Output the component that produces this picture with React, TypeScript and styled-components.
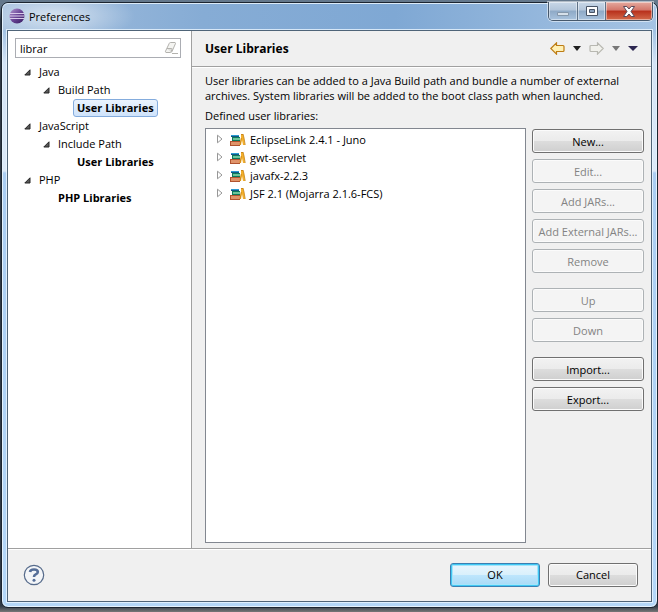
import React from "react";
import styled, { createGlobalStyle, css } from "styled-components";

const GlobalStyle = createGlobalStyle`
  * { box-sizing: border-box; }
  html, body { margin: 0; padding: 0; }
  body, button, input {
    font-family: "Open Sans", "Noto Sans", sans-serif;
    font-size: 11px;
    line-height: 15px;
    color: #000;
  }
  h1, h2, p, ul { margin: 0; padding: 0; }
  ul { list-style: none; }
  svg { display: block; }
`;

const Desktop = styled.div`
  min-height: 100vh;
  padding: 2px 0 4px 1px;
  display: flex;
  background: linear-gradient(180deg, #64788c 0, #64788c 6px, #303a46 20px, #303a46 calc(100% - 6px), #777 100%);
`;

const Window = styled.section`
  flex: 1;
  min-width: 0;
  display: flex;
  flex-direction: column;
  padding: 0 5px 5px;
  border: 1px solid #1c2530;
  border-radius: 7px;
  box-shadow: inset 0 0 0 1px #e4f2fd;
  background:
    linear-gradient(180deg, #8fb3d9 0, #a3c3e4 28px, #d3e3f5 60px, #dbe9f8 168px, #aacdf2 170px, #b4d7f8 100%);
`;

const TitleBar = styled.header`
  height: 27px;
  margin: 0 -4px;
  padding: 0 0 0 6px;
  display: flex;
  flex-shrink: 0;
  border-top: 1px solid #dcebf8;
  border-radius: 6px 6px 0 0;
  background:
    radial-gradient(ellipse 80px 26px at 52px 12px, rgba(255, 255, 255, 0.6), rgba(255, 255, 255, 0) 100%),
    linear-gradient(90deg, #a2bedd 0, #86acd5 200px, #7fa8d4 60%, #a5c3e3 100%);
`;

const Title = styled.h1`
  flex: 1;
  padding: 5px 0 0 4px;
  font-size: 11px;
  font-weight: 400;
  line-height: 15px;
`;

const AppIcon = styled.div`
  padding-top: 4px;
`;

const Captions = styled.div`
  display: flex;
  height: 19px;
  margin: -2px 3px 0 0;
  border: 1px solid #46586c;
  border-top: 0;
  border-radius: 0 0 5px 5px;
  overflow: hidden;
  box-shadow: 0 0 0 1px rgba(255, 255, 255, 0.5);
`;

const CaptionButton = styled.button<{ $kind?: "close" }>`
  width: ${(p) => (p.$kind ? 47 : 28)}px;
  padding: 0;
  display: flex;
  align-items: center;
  justify-content: center;
  border: 0;
  background: linear-gradient(180deg, #c8d7e7 0, #b2c5da 45%, #8ea9c6 50%, #a9c3de 100%);
  box-shadow: inset 0 0 0 1px rgba(255, 255, 255, 0.45);
  & + & { border-left: 1px solid #5e7186; }
  ${(p) =>
    p.$kind &&
    css`
      background: linear-gradient(180deg, #e5aa9f 0, #d3766a 45%, #b8301b 50%, #d36a4b 100%);
    `}
`;

const Client = styled.div`
  flex: 1;
  min-height: 0;
  display: flex;
  flex-direction: column;
  border: 1px solid #4f6478;
  background: #f0f0f0;
  box-shadow: 0 0 0 1px rgba(235, 246, 255, 0.8);
`;

const Panes = styled.div`
  flex: 1;
  display: flex;
  border-bottom: 1px solid #a0a0a0;
`;

const Sidebar = styled.nav`
  width: 184px;
  flex-shrink: 0;
  padding: 7px 7px 0 7px;
  background: #fff;
  border-right: 1px solid #a0a0a0;
`;

const FilterBox = styled.div`
  height: 20px;
  margin-right: 3px;
  padding: 0 2px 0 4px;
  display: flex;
  align-items: center;
  border: 1px solid #abadb3;
`;

const FilterInput = styled.input`
  flex: 1;
  min-width: 0;
  padding: 0;
  border: 0;
  outline: 0;
  background: transparent;
`;

const IconButton = styled.button`
  padding: 0;
  border: 0;
  background: none;
`;

const Tree = styled.ul`
  padding-top: 5px;
`;

const TreeRow = styled.li<{ $level: number; $match?: boolean }>`
  height: 18px;
  padding-left: ${(p) => 9 + p.$level * 19}px;
  display: flex;
  align-items: center;
  font-weight: ${(p) => (p.$match ? 700 : 400)};
`;

const Toggle = styled.span`
  width: 11px;
  flex-shrink: 0;
`;

const TreeLabel = styled.span<{ $selected?: boolean }>`
  height: 18px;
  padding: 0 3px;
  line-height: 16px;
  white-space: nowrap;
  border: 1px solid transparent;
  border-radius: 3px;
  ${(p) =>
    p.$selected &&
    css`
      border-color: #84acdd;
      background: linear-gradient(180deg, #eaf3fe, #cfe3fb);
    `}
`;

const Page = styled.main`
  flex: 1;
  min-width: 0;
  display: flex;
  flex-direction: column;
`;

const PageHeader = styled.div`
  height: 36px;
  padding: 0 13px;
  display: flex;
  align-items: center;
  justify-content: space-between;
  border-bottom: 1px solid #a0a0a0;
  box-shadow: 0 1px 0 #fff;
`;

const PageTitle = styled.h2`
  font-size: 12px;
  line-height: 18px;
  font-weight: 700;
`;

const History = styled.div`
  display: flex;
  align-items: center;
  gap: 8px;
`;

const PageBody = styled.div`
  flex: 1;
  display: flex;
  flex-direction: column;
  padding: 6px 7px 5px 13px;
`;

const Description = styled.p`
  max-width: 434px;
`;

const ListLabel = styled.p`
  margin: 5px 0;
`;

const Columns = styled.div`
  flex: 1;
  display: flex;
  gap: 6px;
`;

const LibraryList = styled.ul`
  flex: 1;
  padding: 1px 0;
  background: #fff;
  border: 1px solid #828790;
`;

const LibraryRow = styled.li`
  height: 18px;
  padding-left: 11px;
  display: flex;
  align-items: center;
`;

const LibraryIcon = styled.span`
  margin: 0 4px 0 7px;
`;

const Actions = styled.div`
  width: 112px;
  display: flex;
  flex-direction: column;
  gap: 15px;
  padding-top: 1px;
`;

const ActionGroup = styled.div`
  display: flex;
  flex-direction: column;
  gap: 6px;
`;

const PushButton = styled.button<{ $primary?: boolean }>`
  height: 24px;
  padding: 0 2px;
  white-space: nowrap;
  border: 1px solid #707070;
  border-radius: 3px;
  background: linear-gradient(180deg, #f2f2f2 0, #ebebeb 50%, #dddddd 50%, #cfcfcf 100%);
  box-shadow: inset 0 0 0 1px #fbfbfb;
  &:disabled {
    color: #838383;
    border-color: #adb2b5;
    background: #f4f4f4;
  }
  ${(p) =>
    p.$primary &&
    css`
      border-color: #3c7fb1;
      background: linear-gradient(180deg, #eaf6fd 0, #d9f0fc 50%, #bee6fd 50%, #a7d9f5 100%);
      box-shadow: inset 0 0 0 1px #3fc8f4, inset 0 0 0 2px #a5e4fa;
    `}
`;

const Footer = styled.footer`
  height: 52px;
  padding: 0 13px 2px 15px;
  display: flex;
  align-items: center;
  justify-content: space-between;
  border-top: 1px solid #fff;
`;

const DialogButtons = styled.div`
  display: grid;
  grid-template-columns: 90px 90px;
  gap: 8px;
`;

const EclipseIcon = () => (
  <svg width="16" height="16" viewBox="0 0 16 16">
    <defs>
      <linearGradient id="orb" x1="0" y1="0" x2="1" y2="1">
        <stop offset="0" stopColor="#b39ad0" />
        <stop offset="0.5" stopColor="#6a4596" />
        <stop offset="1" stopColor="#341a5e" />
      </linearGradient>
    </defs>
    <circle cx="8" cy="8" r="7.5" fill="url(#orb)" />
    <path d="M1 5.5h14M.5 8h15M1 10.5h14" stroke="#d9cbea" strokeWidth="1" />
  </svg>
);

const Eraser = () => (
  <svg width="14" height="14" viewBox="0 0 14 14" fill="#f4f4f1" stroke="#b3b2ae">
    <path d="M6.5 1.500h4.500q.8.300.5 1L8 10.500q-.5 1-1.500 1H2q-1-.3-.5-1.300L5.300 2.300q.3-.8 1.200-.8z" />
    <path d="M3 7.500h4.500q1 0 .5 1L7 11" fill="#dededb" />
    <path d="M8 12.500h6" />
  </svg>
);

const Expanded = () => (
  <svg width="7" height="7" viewBox="0 0 7 7">
    <path d="M6 .8V6H.8z" fill="#595959" stroke="#262626" />
  </svg>
);

const Collapsed = () => (
  <svg width="6" height="10" viewBox="0 0 6 10">
    <path d="M.5 1.200v7.600L5 5z" fill="#fff" stroke="#979797" />
  </svg>
);

const Books = () => (
  <svg width="16" height="13" viewBox="0 0 16 13">
    <path d="M1 2h8v1H1z" fill="#2b9bd2" />
    <path d="M1 3h8v1H1z" fill="#145685" />
    <path d="M2 4h8v4H2z" fill="#0c7a5c" />
    <path d="M3 5h7v2H3z" fill="#6cc49b" />
    <path d="M0 8h10v5H0z" fill="#b0532f" />
    <path d="M1 9h9v3H1z" fill="#e0936a" />
    <path d="M11 1h2l1 4 1 7h-2l-1-5-1 5H9.500L11 5z" fill="#f3b02c" />
    <path d="M13 1l1 4 1.200 7M11.300 5L10 12M11 1.500h2" stroke="#c47f12" strokeWidth=".8" fill="none" />
  </svg>
);

const BackArrow = () => (
  <svg width="15" height="13" viewBox="0 0 15 13">
    <path d="M.8 6.500L6.500.900v2.600H13q1 0 1 1v4q0 1-1 1H6.500v2.600z" fill="#fff0b4" stroke="#bd7c13" strokeWidth="1.200" />
  </svg>
);

const ForwardArrow = () => (
  <svg width="15" height="13" viewBox="0 0 15 13">
    <path d="M14.200 6.500L8.500.900v2.600H2q-1 0-1 1v4q0 1 1 1h6.500v2.600z" fill="#f1f1ec" stroke="#b8b8b1" strokeWidth="1.200" />
  </svg>
);

const Caret = ({ color, width = 8 }: { color: string; width?: number }) => (
  <svg width={width} height="5" viewBox="0 0 7 4" preserveAspectRatio="none">
    <path d="M0 0h7L3.500 4z" fill={color} />
  </svg>
);

const Help = () => (
  <svg width="22" height="22" viewBox="0 0 22 22" fill="none">
    <circle cx="11" cy="11" r="9.700" fill="#f3f5f8" stroke="#566b8b" strokeWidth="1.200" />
    <path d="M7 8Q7.300 5.500 11 5.500t3.800 2.400Q14.800 9.300 12.700 10.400 11 11.200 11 13" stroke="#556e98" strokeWidth="2.600" />
    <circle cx="11" cy="16.200" r="1.500" fill="#556e98" />
  </svg>
);

const MinimizeGlyph = () => (
  <svg width="12" height="12" viewBox="0 0 12 12">
    <path d="M.5 7.500h11v3H.5z" fill="#d6e0ea" stroke="#8497ab" />
  </svg>
);

const MaximizeGlyph = () => (
  <svg width="12" height="10" viewBox="0 0 12 10">
    <path d="M.5.500h11v9H.5z" fill="#fff" stroke="#485466" />
    <path d="M3.500 3.500h5v3h-5z" fill="#8ba3bf" stroke="#485466" />
  </svg>
);

const CloseGlyph = () => (
  <svg width="12" height="11" viewBox="0 0 12 11">
    <path d="M.5.500h3.300L6 3 8.200.500h3.300L8 5.500l3.500 5H8.200L6 8l-2.200 2.500H.5l3.500-5z" fill="#fff" stroke="#58495a" />
  </svg>
);

const tree = [
  { label: "Java", level: 0, open: true },
  { label: "Build Path", level: 1, open: true },
  { label: "User Libraries", level: 2, match: true, selected: true },
  { label: "JavaScript", level: 0, open: true },
  { label: "Include Path", level: 1, open: true },
  { label: "User Libraries", level: 2, match: true },
  { label: "PHP", level: 0, open: true },
  { label: "PHP Libraries", level: 1, match: true },
];

const libraries = ["EclipseLink 2.4.1 - Juno", "gwt-servlet", "javafx-2.2.3", "JSF 2.1 (Mojarra 2.1.6-FCS)"];

const actionGroups = [
  [
    { label: "New...", enabled: true },
    { label: "Edit..." },
    { label: "Add JARs..." },
    { label: "Add External JARs..." },
    { label: "Remove" },
  ],
  [{ label: "Up" }, { label: "Down" }],
  [
    { label: "Import...", enabled: true },
    { label: "Export...", enabled: true },
  ],
];

export default function App() {
  return (
    <Desktop>
      <GlobalStyle />
      <Window>
        <TitleBar>
          <AppIcon><EclipseIcon /></AppIcon>
          <Title>Preferences</Title>
          <Captions>
            <CaptionButton aria-label="Minimize"><MinimizeGlyph /></CaptionButton>
            <CaptionButton aria-label="Maximize"><MaximizeGlyph /></CaptionButton>
            <CaptionButton aria-label="Close" $kind="close"><CloseGlyph /></CaptionButton>
          </Captions>
        </TitleBar>
        <Client>
          <Panes>
            <Sidebar>
              <FilterBox>
                <FilterInput aria-label="Filter" defaultValue="librar" />
                <IconButton aria-label="Clear filter"><Eraser /></IconButton>
              </FilterBox>
              <Tree>
                {tree.map((n, i) => (
                  <TreeRow key={i} $level={n.level} $match={n.match}>
                    <Toggle>{n.open && <Expanded />}</Toggle>
                    <TreeLabel $selected={n.selected}>{n.label}</TreeLabel>
                  </TreeRow>
                ))}
              </Tree>
            </Sidebar>
            <Page>
              <PageHeader>
                <PageTitle>User Libraries</PageTitle>
                <History>
                  <IconButton aria-label="Back"><BackArrow /></IconButton>
                  <IconButton aria-label="Back history"><Caret color="#202020" /></IconButton>
                  <IconButton aria-label="Forward" disabled><ForwardArrow /></IconButton>
                  <IconButton aria-label="Forward history" disabled><Caret color="#777" /></IconButton>
                  <IconButton aria-label="View menu"><Caret color="#2c2650" width={10} /></IconButton>
                </History>
              </PageHeader>
              <PageBody>
                <Description>
                  User libraries can be added to a Java Build path and bundle a number of external archives.
                  System libraries will be added to the boot class path when launched.
                </Description>
                <ListLabel>Defined user libraries:</ListLabel>
                <Columns>
                  <LibraryList>
                    {libraries.map((name) => (
                      <LibraryRow key={name}>
                        <Collapsed />
                        <LibraryIcon><Books /></LibraryIcon>
                        {name}
                      </LibraryRow>
                    ))}
                  </LibraryList>
                  <Actions>
                    {actionGroups.map((group, i) => (
                      <ActionGroup key={i}>
                        {group.map((a) => (
                          <PushButton key={a.label} disabled={!a.enabled}>{a.label}</PushButton>
                        ))}
                      </ActionGroup>
                    ))}
                  </Actions>
                </Columns>
              </PageBody>
            </Page>
          </Panes>
          <Footer>
            <IconButton aria-label="Help"><Help /></IconButton>
            <DialogButtons>
              <PushButton $primary>OK</PushButton>
              <PushButton>Cancel</PushButton>
            </DialogButtons>
          </Footer>
        </Client>
      </Window>
    </Desktop>
  );
}
